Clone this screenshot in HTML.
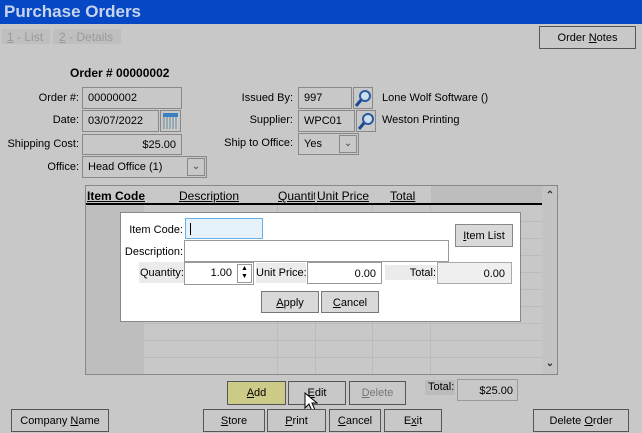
<!DOCTYPE html>
<html><head><style>
*{box-sizing:border-box;margin:0;padding:0}
body{width:642px;height:433px;background:#c8c8c8;font-family:"Liberation Sans",Arial,sans-serif;font-size:11px;color:#000;position:relative;overflow:hidden}
.a{position:absolute;white-space:nowrap}
.lbl{position:absolute;text-align:right;white-space:nowrap}
.box{position:absolute;border:1px solid #888;background:#c8c8c8;padding:4px 5px 0;white-space:nowrap}
.btn{position:absolute;border:1px solid #555;background:#c8c8c8;text-align:center;white-space:nowrap}
.btn2{position:absolute;border:1px solid #888;background:#d9d9d9;text-align:center;white-space:nowrap}
u{text-decoration:underline}
.dd{position:absolute;border:1px solid #888;width:18px;top:1px;bottom:1px;right:1px;text-align:center;font-size:10px;line-height:16px;color:#444}
.mag{position:absolute;border:1px solid #888;width:20px;height:22px}
</style></head><body>
<div class="a" style="left:0;top:0;width:642px;height:24px;background:#0547c5;color:#c8d4ec;font-weight:bold;font-size:17px;padding:2px 4px">Purchase Orders</div>
<div class="a" style="left:2px;top:29px;width:48px;height:15px;background:#bfbfbf;color:#999;font-size:12px;padding:1px 5px"><u>1</u> - List</div>
<div class="a" style="left:53px;top:29px;width:68px;height:15px;background:#bfbfbf;color:#999;font-size:12px;padding:1px 6px"><u>2</u> - Details</div>
<div class="btn" style="left:539px;top:26px;width:97px;height:23px;line-height:23px">Order <u>N</u>otes</div>
<div class="a" style="left:70px;top:66px;font-weight:bold;font-size:12px">Order # 00000002</div>

<div class="lbl" style="right:563px;top:92px">Order #:</div>
<div class="box" style="left:82px;top:87px;width:100px;height:22px">00000002</div>
<div class="lbl" style="right:563px;top:114px">Date:</div>
<div class="box" style="left:82px;top:110px;width:77px;height:22px">03/07/2022</div>
<div class="a" style="left:160px;top:110px;width:21px;height:22px;border:1px solid #888;padding:2px">
<div style="width:15px;height:16px;background:repeating-linear-gradient(90deg,#9aa 0 2px,#ccd 2px 3px);border-top:4px solid #3a7fc0"></div></div>
<div class="lbl" style="right:563px;top:138px">Shipping Cost:</div>
<div class="box" style="left:82px;top:134px;width:100px;height:21px;text-align:right">$25.00</div>
<div class="lbl" style="right:563px;top:161px">Office:</div>
<div class="box" style="left:82px;top:156px;width:125px;height:22px">Head Office (1)<div class="dd">&#8964;</div></div>

<div class="lbl" style="right:349px;top:92px">Issued By:</div>
<div class="box" style="left:298px;top:87px;width:54px;height:22px">997</div>
<div class="mag" style="left:353px;top:87px"><svg width="18" height="20"><circle cx="11" cy="8" r="5" fill="#cde" stroke="#2a5aa0" stroke-width="2"/><line x1="7" y1="12" x2="2" y2="18" stroke="#1a4a90" stroke-width="3"/></svg></div>
<div class="a" style="left:382px;top:92px">Lone Wolf Software ()</div>
<div class="lbl" style="right:349px;top:114px">Supplier:</div>
<div class="box" style="left:298px;top:110px;width:57px;height:22px">WPC01</div>
<div class="mag" style="left:356px;top:110px"><svg width="18" height="20"><circle cx="11" cy="8" r="5" fill="#cde" stroke="#2a5aa0" stroke-width="2"/><line x1="7" y1="12" x2="2" y2="18" stroke="#1a4a90" stroke-width="3"/></svg></div>
<div class="a" style="left:382px;top:114px">Weston Printing</div>
<div class="lbl" style="right:349px;top:137px">Ship to Office:</div>
<div class="box" style="left:298px;top:133px;width:61px;height:22px">Yes<div class="dd">&#8964;</div></div>

<!-- grid -->
<div class="a" style="left:85px;top:185px;width:473px;height:190px;border:1px solid #888;background:#c8c8c8;overflow:hidden">
 <div class="a" style="left:0;top:0;width:58px;height:190px;background:#bebebe"></div>
 <div class="a" style="left:58px;top:19px;width:398px;height:170px;background:repeating-linear-gradient(180deg,#c8c8c8 0 16px,#bbb 16px 17px)"></div>
 <div class="a" style="left:191px;top:0;width:1px;height:190px;background:#bbb"></div>
 <div class="a" style="left:229px;top:0;width:1px;height:190px;background:#bbb"></div>
 <div class="a" style="left:286px;top:0;width:1px;height:190px;background:#bbb"></div>
 <div class="a" style="left:344px;top:0;width:1px;height:190px;background:#bbb"></div>
 <div class="a" style="left:0;top:0;width:456px;height:19px;background:#c8c8c8;border-bottom:2px solid #000"></div>
 <div class="a" style="left:345px;top:0;width:111px;height:17px;background:#bdbdbd"></div>
 <div class="a" style="left:1px;top:3px;font-size:12px;font-weight:bold"><u>Item Code</u></div>
 <div class="a" style="left:93px;top:3px;font-size:12px"><u>Description</u></div>
 <div class="a" style="left:192px;top:3px;font-size:12px;width:37px;overflow:hidden;white-space:nowrap"><u>Quantity</u></div>
 <div class="a" style="left:231px;top:3px;font-size:12px"><u>Unit Price</u></div>
 <div class="a" style="left:304px;top:3px;font-size:12px"><u>Total</u></div>
 <div class="a" style="left:456px;top:0;width:16px;height:190px;background:#c4c4c4;font-size:10px;font-weight:bold;text-align:center;color:#333;padding-top:4px">&#8963;</div>
 <div class="a" style="left:456px;top:172px;width:16px;font-size:10px;font-weight:bold;text-align:center;color:#333">&#8964;</div>
</div>

<!-- dialog -->
<div class="a" style="left:120px;top:212px;width:401px;height:110px;background:#fff;border:1px solid #888">
 <div class="lbl" style="right:337px;top:11px">Item Code:</div>
 <div class="a" style="left:64px;top:5px;width:78px;height:21px;background:#e6f2fb;border:1px solid #6ab0e6"><div style="margin:4px 0 0 4px;width:1px;height:12px;background:#000"></div></div>
 <div class="lbl" style="right:337px;top:33px">Description:</div>
 <div class="a" style="left:63px;top:27px;width:265px;height:22px;border:1px solid #999"></div>
 <div class="btn2" style="left:334px;top:11px;width:58px;height:23px;line-height:22px"><u>I</u>tem List</div>
 <div class="a" style="left:18px;top:49px;width:45px;height:21px;background:#ebebeb;text-align:right;padding-top:5px">Quantity:</div>
 <div class="a" style="left:63px;top:49px;width:70px;height:23px;border:1px solid #999;text-align:right;padding:4px 21px 0 0">1.00
  <div class="a" style="right:1px;top:1px;width:15px;height:19px;border:1px solid #999;font-size:7px;line-height:8px;text-align:center">&#9650;<br>&#9660;</div></div>
 <div class="a" style="left:135px;top:50px;width:50px;height:20px;background:#ebebeb;padding-top:4px;text-align:center">Unit Price:</div>
 <div class="a" style="left:186px;top:49px;width:75px;height:22px;border:1px solid #999;text-align:right;padding:5px 5px 0 0">0.00</div>
 <div class="a" style="left:264px;top:52px;width:51px;height:15px;background:#ebebeb;text-align:right;padding-top:2px">Total:</div>
 <div class="a" style="left:316px;top:49px;width:75px;height:22px;border:1px solid #aaa;background:#efefef;text-align:right;padding:5px 6px 0 0">0.00</div>
 <div class="btn2" style="left:140px;top:78px;width:58px;height:22px;line-height:22px;border-color:#777"><u>A</u>pply</div>
 <div class="btn2" style="left:200px;top:78px;width:58px;height:22px;line-height:22px;border-color:#777"><u>C</u>ancel</div>
</div>

<div class="btn" style="left:227px;top:381px;width:59px;height:24px;line-height:23px;background:#cccc88"><u>A</u>dd</div>
<div class="btn" style="left:288px;top:381px;width:58px;height:24px;line-height:23px"><u>E</u>dit</div>
<div class="btn" style="left:349px;top:381px;width:57px;height:24px;line-height:23px;color:#777"><u>D</u>elete</div>
<div class="a" style="left:425px;top:380px;width:30px;height:15px;background:#bcbcbc;padding:1px 0 0 3px">Total:</div>
<div class="a" style="left:457px;top:379px;width:61px;height:22px;border:1px solid #999;text-align:right;padding:5px 4px 0 0">$25.00</div>
<svg class="a" style="left:304px;top:392px" width="14" height="22"><path d="M1 1 L1 16 L5 12 L8 19 L11 18 L8 11 L13 11 Z" fill="#fff" stroke="#000" stroke-width="1"/></svg>

<div class="btn" style="left:11px;top:409px;width:98px;height:23px;line-height:22px">Company <u>N</u>ame</div>
<div class="btn" style="left:203px;top:409px;width:62px;height:23px;line-height:22px"><u>S</u>tore</div>
<div class="btn" style="left:267px;top:409px;width:59px;height:23px;line-height:22px"><u>P</u>rint</div>
<div class="btn" style="left:329px;top:409px;width:52px;height:23px;line-height:22px"><u>C</u>ancel</div>
<div class="btn" style="left:384px;top:409px;width:58px;height:23px;line-height:22px">E<u>x</u>it</div>
<div class="btn" style="left:533px;top:409px;width:96px;height:23px;line-height:22px">Delete <u>O</u>rder</div>
</body></html>
